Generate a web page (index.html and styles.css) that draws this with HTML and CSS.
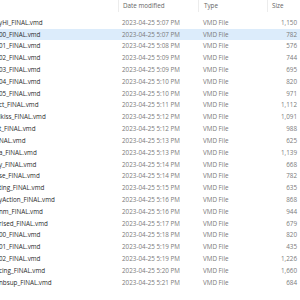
FILE: index.html
```html
<!DOCTYPE html>
<html lang="en">
<head>
    <meta charset="UTF-8">
    <title>Files</title>
    <link rel="stylesheet" href="styles.css">
</head>
<body>
    <div class="file-list">
        <div class="list-header">
            <div class="col-name">
                <svg class="sort-arrow" width="6" height="3" viewBox="0 0 6 3"><path d="M0.5 2.7 L3 0.4 L5.5 2.7" fill="none" stroke="#b9b9b9" stroke-width="0.8"/></svg>
            </div>
            <div class="col-date">Date modified</div>
            <div class="col-type">Type</div>
            <div class="col-size">Size</div>
        </div>

        <div class="file-row"><div class="col-name">yHi_FINAL.vmd</div><div class="col-date">2023-04-25 5:07 PM</div><div class="col-type">VMD File</div><div class="col-size">1,150</div></div>
        <div class="file-row selected"><div class="col-name">00_FINAL.vmd</div><div class="col-date">2023-04-25 5:07 PM</div><div class="col-type">VMD File</div><div class="col-size">782</div></div>
        <div class="file-row"><div class="col-name">01_FINAL.vmd</div><div class="col-date">2023-04-25 5:08 PM</div><div class="col-type">VMD File</div><div class="col-size">576</div></div>
        <div class="file-row"><div class="col-name">02_FINAL.vmd</div><div class="col-date">2023-04-25 5:09 PM</div><div class="col-type">VMD File</div><div class="col-size">744</div></div>
        <div class="file-row"><div class="col-name">03_FINAL.vmd</div><div class="col-date">2023-04-25 5:09 PM</div><div class="col-type">VMD File</div><div class="col-size">695</div></div>
        <div class="file-row"><div class="col-name">04_FINAL.vmd</div><div class="col-date">2023-04-25 5:10 PM</div><div class="col-type">VMD File</div><div class="col-size">820</div></div>
        <div class="file-row"><div class="col-name">05_FINAL.vmd</div><div class="col-date">2023-04-25 5:10 PM</div><div class="col-type">VMD File</div><div class="col-size">971</div></div>
        <div class="file-row"><div class="col-name">ct_FINAL.vmd</div><div class="col-date">2023-04-25 5:11 PM</div><div class="col-type">VMD File</div><div class="col-size">1,112</div></div>
        <div class="file-row"><div class="col-name">lkiss_FINAL.vmd</div><div class="col-date">2023-04-25 5:12 PM</div><div class="col-type">VMD File</div><div class="col-size">1,091</div></div>
        <div class="file-row"><div class="col-name">t_FINAL.vmd</div><div class="col-date">2023-04-25 5:12 PM</div><div class="col-type">VMD File</div><div class="col-size">988</div></div>
        <div class="file-row"><div class="col-name">NAL.vmd</div><div class="col-date">2023-04-25 5:13 PM</div><div class="col-type">VMD File</div><div class="col-size">625</div></div>
        <div class="file-row"><div class="col-name">a_FINAL.vmd</div><div class="col-date">2023-04-25 5:13 PM</div><div class="col-type">VMD File</div><div class="col-size">1,139</div></div>
        <div class="file-row"><div class="col-name">y_FINAL.vmd</div><div class="col-date">2023-04-25 5:14 PM</div><div class="col-type">VMD File</div><div class="col-size">668</div></div>
        <div class="file-row"><div class="col-name">se_FINAL.vmd</div><div class="col-date">2023-04-25 5:14 PM</div><div class="col-type">VMD File</div><div class="col-size">782</div></div>
        <div class="file-row"><div class="col-name">ting_FINAL.vmd</div><div class="col-date">2023-04-25 5:15 PM</div><div class="col-type">VMD File</div><div class="col-size">635</div></div>
        <div class="file-row"><div class="col-name">yAction_FINAL.vmd</div><div class="col-date">2023-04-25 5:16 PM</div><div class="col-type">VMD File</div><div class="col-size">868</div></div>
        <div class="file-row"><div class="col-name">nm_FINAL.vmd</div><div class="col-date">2023-04-25 5:16 PM</div><div class="col-type">VMD File</div><div class="col-size">944</div></div>
        <div class="file-row"><div class="col-name">rised_FINAL.vmd</div><div class="col-date">2023-04-25 5:17 PM</div><div class="col-type">VMD File</div><div class="col-size">679</div></div>
        <div class="file-row"><div class="col-name">00_FINAL.vmd</div><div class="col-date">2023-04-25 5:18 PM</div><div class="col-type">VMD File</div><div class="col-size">820</div></div>
        <div class="file-row"><div class="col-name">01_FINAL.vmd</div><div class="col-date">2023-04-25 5:19 PM</div><div class="col-type">VMD File</div><div class="col-size">435</div></div>
        <div class="file-row"><div class="col-name">02_FINAL.vmd</div><div class="col-date">2023-04-25 5:19 PM</div><div class="col-type">VMD File</div><div class="col-size">1,226</div></div>
        <div class="file-row"><div class="col-name">cing_FINAL.vmd</div><div class="col-date">2023-04-25 5:20 PM</div><div class="col-type">VMD File</div><div class="col-size">1,660</div></div>
        <div class="file-row"><div class="col-name">nbsup_FINAL.vmd</div><div class="col-date">2023-04-25 5:21 PM</div><div class="col-type">VMD File</div><div class="col-size">684</div></div>
    </div>
</body>
</html>
```

FILE: styles.css
```css
body {
    margin: 0;
    background-color: #fff;
    font-family: "Open Sans", "Noto Sans", sans-serif;
    font-size: 6.3px;
    color: #2a2a2a;
}
.file-list {
    width: 300px;
    overflow: hidden;
}
.list-header, .file-row {
    display: grid;
    grid-template-columns: 118px 80px 69px 33px;
    white-space: nowrap;
}
.list-header {
    height: 16.8px;
    align-items: start;
    line-height: 11px;
    color: #666;
}
.list-header .col-date,
.list-header .col-type,
.list-header .col-size {
    border-left: 1px solid #ececec;
    height: 12px;
}
.list-header .col-name {
    position: relative;
}
.sort-arrow {
    position: absolute;
    top: 0;
    left: 44px;
}
.file-row {
    height: 11.82px;
    line-height: 11.82px;
}
.file-row.selected {
    background-color: #dcecfb;
}
.col-name {
    overflow: hidden;
    text-indent: -1px;
}
.col-date {
    padding-left: 4px;
}
.col-type {
    padding-left: 5px;
}
.col-size {
    padding-left: 4px;
}
.file-row .col-date,
.file-row .col-type,
.file-row .col-size {
    color: #7a7a7a;
}
.file-row .col-size {
    text-align: right;
    padding-right: 3px;
}
```
